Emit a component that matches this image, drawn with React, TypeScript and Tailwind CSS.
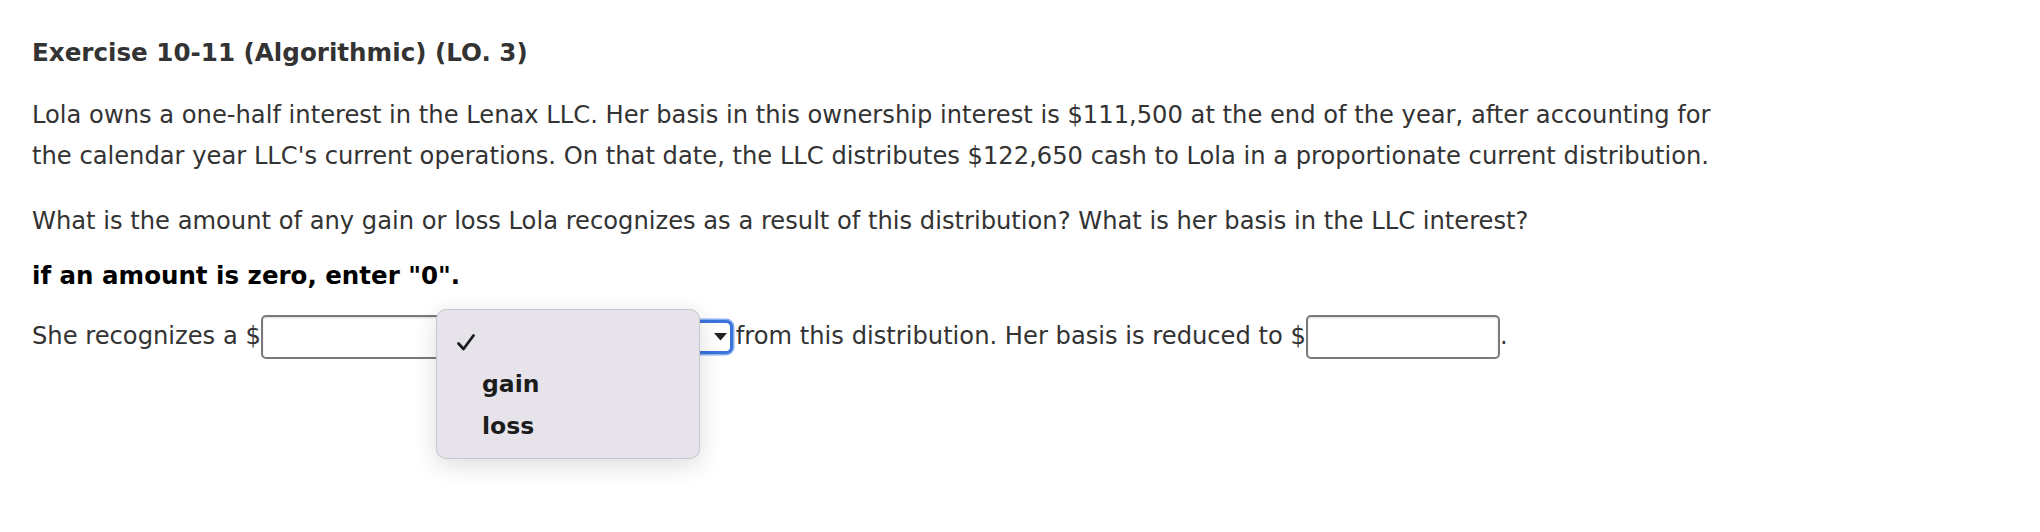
export default function App() {
  return (
    <div className="min-h-[532px] w-[2040px] bg-white pl-[32px] pt-[37px] text-[#333333] font-['DejaVu_Sans',Verdana,sans-serif]">
      <h2 className="text-[24.6px] font-bold leading-[32px] whitespace-nowrap">
        Exercise 10-11 (Algorithmic) (LO. 3)
      </h2>
      <p className="mt-[25.5px] text-[24.2px] leading-[41.5px] whitespace-nowrap">
        <span className="block">
          Lola owns a one-half interest in the Lenax LLC. Her basis in this ownership interest is $111,500 at the end of the year, after accounting for
        </span>
        <span className="block">
          the calendar year LLC's current operations. On that date, the LLC distributes $122,650 cash to Lola in a proportionate current distribution.
        </span>
      </p>
      <p className="mt-[22.5px] text-[24.2px] leading-[42px] whitespace-nowrap">
        What is the amount of any gain or loss Lola recognizes as a result of this distribution? What is her basis in the LLC interest?
      </p>
      <p className="mt-[13px] text-[24.5px] leading-[42px] font-bold text-black whitespace-nowrap">
        if an amount is zero, enter "0".
      </p>
      <div className="relative mt-[17.5px] flex h-[44px] items-center text-[24.2px] whitespace-nowrap">
        <span>She recognizes a $</span>
        <div className="h-[44px] w-[192px] rounded-[5px] border-2 border-[#7a7a7a] bg-white shadow-[inset_0_1px_2px_rgba(0,0,0,0.15)]" />
        <div className="ml-px flex h-[34px] w-[279px] items-center justify-end rounded-[7px] border-[3px] border-[#3b73dc] bg-white pr-[3px] shadow-[0_0_0_1.5px_rgba(110,155,240,0.8)]">
          <svg width="13" height="8" viewBox="0 0 13 8">
            <path d="M0 0 L13 0 L6.5 7.5 Z" fill="#222" />
          </svg>
        </div>
        <span className="ml-[3px]">from this distribution. Her basis is reduced to $</span>
        <div className="h-[44px] w-[194px] rounded-[5px] border-2 border-[#7a7a7a] bg-white shadow-[inset_0_1px_2px_rgba(0,0,0,0.15)]" />
        <span>.</span>

        <div className="absolute left-[404px] top-[-6px] h-[150px] w-[264px] rounded-[10px] border border-[#c8c6cc] bg-[#e6e4ea] pt-[11px] shadow-[0_6px_24px_rgba(0,0,0,0.14)] font-['DejaVu_Sans',sans-serif] text-[23.5px] font-bold text-[#1c1c1c]">
          <div className="relative flex h-[42.5px] items-center pl-[45px]">
            <svg className="absolute left-[20px] top-[13px]" width="18" height="17" viewBox="0 0 18 17">
              <path d="M1.5 9.5 L6.5 15 L16.5 1.5" fill="none" stroke="#1c1c1c" strokeWidth="2.8" strokeLinecap="round" strokeLinejoin="round" />
            </svg>
          </div>
          <div className="flex h-[42.5px] items-center pl-[45px]">gain</div>
          <div className="flex h-[42.5px] items-center pl-[45px]">loss</div>
        </div>
      </div>
    </div>
  );
}
